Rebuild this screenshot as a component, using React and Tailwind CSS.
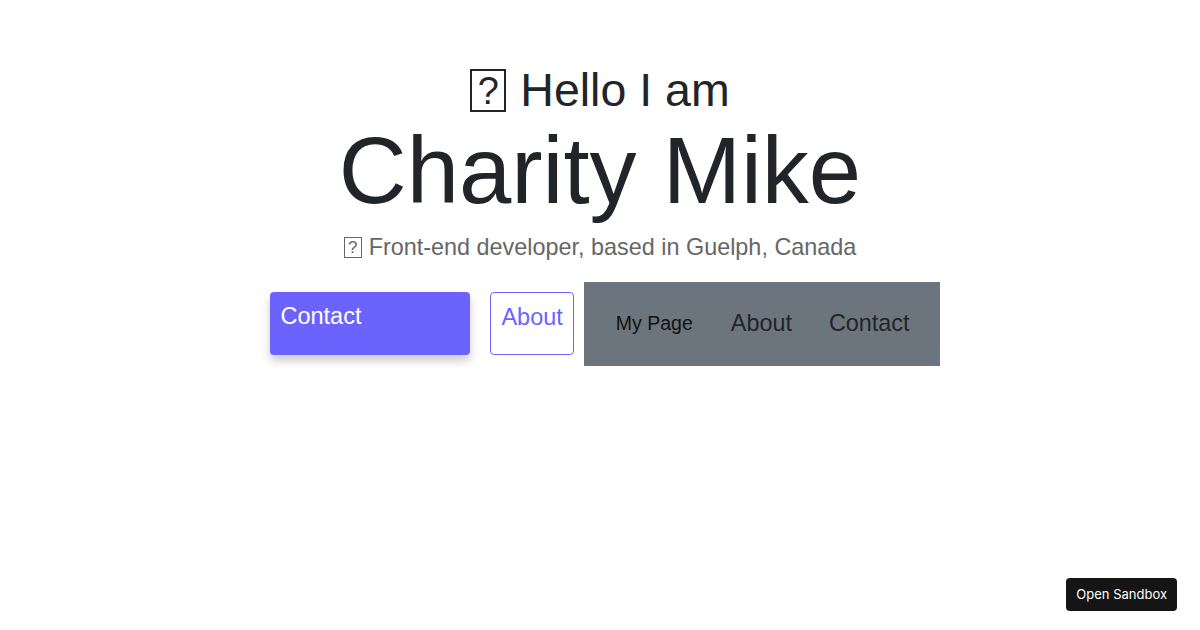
import React from "react";

// box shown where the emoji glyph is missing
const Tofu = ({ className }) => (
  <span
    className={
      "inline-flex items-center justify-center border-current align-baseline leading-none " +
      className
    }
  >
    ?
  </span>
);

const App = () => {
  return (
    <div className="relative w-full h-[630px] bg-white text-[#212529] font-['Liberation_Sans',Arial,sans-serif]">
      <div className="flex flex-col items-center pt-[62px]">
        {/* header */}
        <h3 className="text-[46.5px] leading-[56px] flex items-center gap-[14px]">
          <Tofu className="w-[36px] h-[43px] border-[2.5px] text-[38px] pt-[2px]" />
          <span>Hello I am</span>
        </h3>
        <h1 className="text-[94px] leading-[108px] -mt-[1px]">Charity Mike</h1>
        <p className="text-[23.4px] leading-[30px] text-[#666] flex items-center gap-[7px] mt-[7px]">
          <Tofu className="w-[18px] h-[21px] border text-[17px]" />
          <span>Front-end developer, based in Guelph, Canada</span>
        </p>

        {/* buttons and nav */}
        <div className="flex items-start mt-[20px]">
          <button className="m-[10px] w-[200px] h-[63px] rounded-[4px] bg-[#6c63ff] text-white text-[23.5px] text-left px-[10px] pt-[10px] leading-[28px] flex items-start shadow-[0_6px_10px_rgba(0,0,0,0.2)]">
            Contact
          </button>
          <button className="m-[10px] h-[63px] rounded-[4px] border border-[#6c63ff] text-[#6c63ff] bg-white text-[23.5px] leading-[28px] px-[10px] pt-[10px] flex items-start">
            About
          </button>
          <nav className="h-[84px] bg-[#6c757d] flex items-center pl-[32px] pr-[30px]">
            <a className="text-[19.5px] text-[#111]">My Page</a>
            <a className="text-[23.4px] ml-[38px]">About</a>
            <a className="text-[23.4px] ml-[37px]">Contact</a>
          </nav>
        </div>
      </div>

      {/* sandbox link */}
      <button
        style={{ fontFamily: "Inter, sans-serif" }}
        className="absolute right-[23px] bottom-[19px] h-[33px] px-[10px] rounded-[4px] bg-[#151515] text-white text-[13px]"
      >
        Open Sandbox
      </button>
    </div>
  );
};

export default App;
